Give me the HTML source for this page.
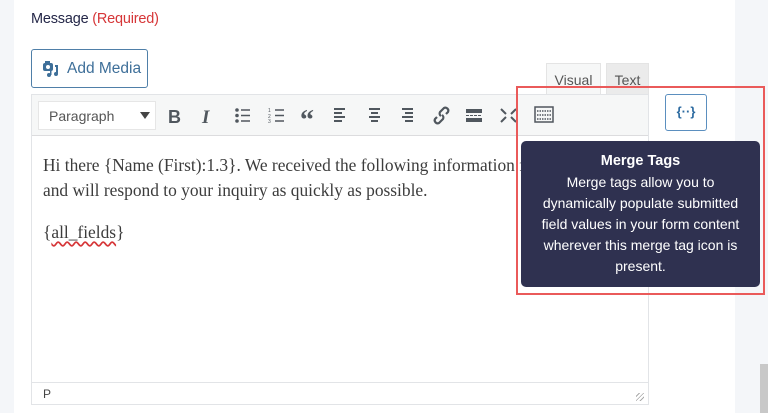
<!DOCTYPE html>
<html><head><meta charset="utf-8"><style>
*{box-sizing:border-box;margin:0;padding:0}
body{width:768px;height:413px;overflow:hidden;background:#f4f6f9;font-family:"Liberation Sans",sans-serif;position:relative}
.abs{position:absolute}
.panel{left:14px;top:0;width:721px;height:413px;background:#fff}
.lbl{left:31px;top:11px;font-size:14.5px;color:#242748;letter-spacing:-0.2px}
.lbl span{color:#d63638}
.media{left:31px;top:49px;width:117px;height:39px;border:1px solid #4f7fa8;border-radius:3px;color:#3e6f99;font-size:15.5px;padding:10px 0 0 35px}
.tab{top:63px;height:31px;font-size:14px;color:#555;padding-top:8px;text-align:center;border:1px solid #e4e4e4;border-bottom:none}
.editor{left:31px;top:94px;width:618px;height:311px;border:1px solid #e2e4e7;background:#fff}
.tb{left:32px;top:95px;width:616px;height:41px;background:#f6f7f7;border-bottom:1px solid #dcdcde}
.sel{left:38px;top:101px;width:118px;height:29px;background:#fff;border:1px solid #e6e6e6;font-size:14px;color:#555;padding:6px 0 0 10px}
.txt{left:43px;font-family:"Liberation Serif",serif;font-size:17.4px;color:#3c3c3c;white-space:nowrap}
.status{left:32px;top:382px;width:616px;height:22px;border-top:1px solid #e2e4e7;font-size:12px;color:#444;padding:4px 0 0 11px}
.mbtn{left:665px;top:94px;width:42px;height:37px;border:1px solid #5b8fbf;border-radius:3px;background:#fff;color:#2c6aa0;font-size:13px;font-weight:bold;text-align:center;padding-top:9px}
.tip{left:521px;top:141px;width:239px;height:146px;background:#2f3150;border-radius:5px;color:#fff;text-align:center;font-size:14px;line-height:21px;padding-top:9px}
.red{left:516px;top:86px;width:249px;height:209px;border:2px solid #ea5a5a}
</style></head><body>
<div class="abs panel"></div>
<div class="abs" style="left:760px;top:364px;width:8px;height:49px;background:#c8c8c8"></div>
<div class="abs lbl">Message <span>(Required)</span></div>
<div class="abs media"><svg class="abs" style="left:10px;top:11px" width="18" height="17" viewBox="0 0 18 17"><rect x="1" y="2" width="10" height="8" rx="2" fill="#3e6f99"/><rect x="3" y="0" width="5" height="3" fill="#3e6f99"/><circle cx="6" cy="6" r="2" fill="#fff"/><path d="M13 4h3v9a2 2 0 1 1-2-2h0V6h-1z" fill="#3e6f99"/><circle cx="7" cy="14" r="2" fill="#3e6f99"/><rect x="8" y="8" width="1.5" height="6" fill="#3e6f99"/></svg>Add Media</div>
<div class="abs tab" style="left:546px;width:55px;background:#f6f7f7">Visual</div>
<div class="abs tab" style="left:606px;width:43px;background:#ebebeb">Text</div>
<div class="abs editor"></div>
<div class="abs tb"></div>
<div class="abs sel">Paragraph<span class="abs" style="left:101px;top:10px;border:5px solid transparent;border-top:7px solid #444;border-bottom:none"></span></div>
<svg class="abs" style="left:160px;top:100px" width="400" height="32" viewBox="0 0 400 32" fill="#50575e" stroke="#50575e">
<text x="8" y="23" font-family="Liberation Sans" font-size="18" font-weight="bold" stroke="none">B</text>
<text x="42" y="23" font-family="Liberation Serif" font-size="19" font-style="italic" font-weight="bold" stroke="none">I</text>
<g stroke-width="1.6"><circle cx="77" cy="10" r="1" /><circle cx="77" cy="15.5" r="1"/><circle cx="77" cy="21" r="1"/><path d="M81 10h9M81 15.5h9M81 21h9"/></g>
<g stroke-width="1.4"><path d="M115 10h9M115 15.5h9M115 21h9"/></g>
<text x="108" y="12" font-size="5" stroke="none">1</text><text x="108" y="18" font-size="5" stroke="none">2</text><text x="108" y="23" font-size="5" stroke="none">3</text>
<text x="140" y="29" font-family="Liberation Serif" font-size="28" font-weight="bold" stroke="none">“</text>
<g stroke-width="2"><path d="M174 9h11M174 13h8M174 17h11M174 21h8"/><path d="M209 9h11M211 13h7M209 17h11M211 21h7"/><path d="M242 9h11M245 13h8M242 17h11M245 21h8"/></g>
<path d="M277 17l-2 2a3 3 0 0 0 4 4l4-4a3 3 0 0 0-1-4M286 14l2-2a3 3 0 0 0-4-4l-4 4a3 3 0 0 0 1 4" fill="none" stroke-width="2.2"/>
<rect x="306" y="9" width="16" height="4" stroke="none"/><rect x="306" y="18" width="16" height="4" stroke="none"/><path d="M306 15.5h16" stroke-width="1" stroke-dasharray="3 1"/>
<path d="M341 9l5 5M356 9l-5 5M341 22l5-5M356 22l-5-5" stroke-width="2"/>
<rect x="375" y="7" width="18" height="15" fill="none" stroke-width="1.5"/><path d="M377 11h14M377 15h14M377 19h14" stroke-width="1.5" stroke-dasharray="1.5 1"/>
</svg>
<div class="abs txt" style="top:155px">Hi there {Name (First):1.3}. We received the following information from you</div>
<div class="abs txt" style="top:180px">and will respond to your inquiry as quickly as possible.</div>
<div class="abs txt" style="top:222px">{<span style="text-decoration:underline wavy #d63638;text-underline-offset:3px">all_fields</span>}</div>
<div class="abs status">P<span class="abs" style="right:4px;bottom:3px;width:8px;height:8px;background:repeating-linear-gradient(135deg,transparent 0 2px,#aaa 2px 3px)"></span></div>
<div class="abs mbtn">{··}</div>
<div class="abs tip"><b style="font-size:14.5px">Merge Tags</b><br>Merge tags allow you to<br>dynamically populate submitted<br>field values in your form content<br>wherever this merge tag icon is<br>present.</div>
<div class="abs red"></div>
</body></html>
